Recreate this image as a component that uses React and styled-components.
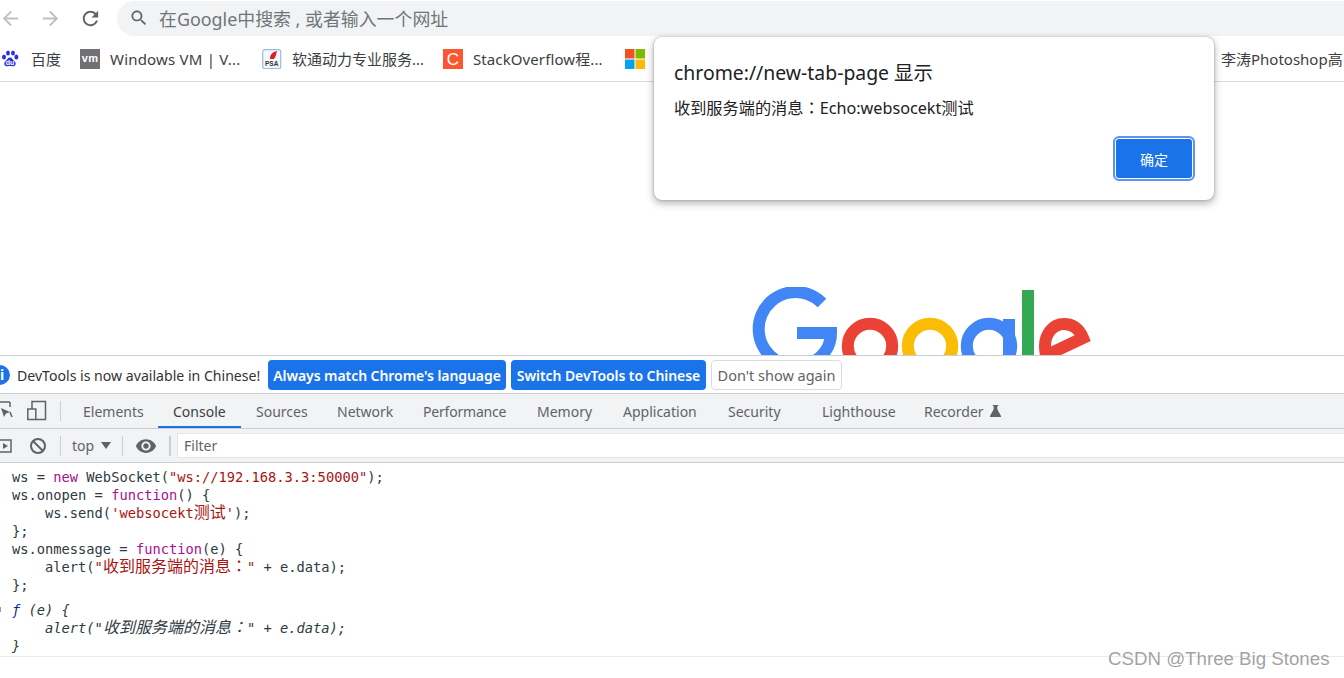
import React from "react";
import styled, { createGlobalStyle } from "styled-components";

const UI_FONT = `"Noto Sans", "Noto Sans CJK SC", sans-serif`;
const MONO_FONT = `"DejaVu Sans Mono", "Noto Sans CJK SC", monospace`;

const Global = createGlobalStyle`
  html, body { margin: 0; padding: 0; background: #fff; overflow: hidden; }
  * { box-sizing: border-box; }
  body { font-family: ${UI_FONT}; }
`;

const Page = styled.div`
  position: relative;
  width: 1344px;
  height: 678px;
  overflow: hidden;
  display: flex;
  flex-direction: column;
`;

const Toolbar = styled.div`
  height: 36px;
  flex: none;
  display: flex;
  align-items: center;
  margin-left: -10px;
  background: #fff;
`;

const NavButton = styled.div`
  width: 40px;
  height: 24px;
  flex: none;
  display: flex;
  align-items: center;
  justify-content: center;
  color: ${(p) => (p.$off ? "#bdc1c6" : "#5f6368")};
  svg { width: 23px; height: 23px; fill: currentColor; }
`;

const Omnibox = styled.div`
  flex: 1;
  height: 35px;
  margin-left: 7px;
  border-radius: 18px 0 0 18px;
  background: #f1f3f4;
  display: flex;
  align-items: center;
  padding-left: 12px;
  color: #70757a;
  font-size: 17.9px;
  white-space: pre;
  svg { width: 20px; height: 20px; fill: #5f6368; margin-right: 10px; }
`;

const Bookmarks = styled.div`
  height: 46px;
  flex: none;
  display: flex;
  align-items: center;
  padding: 0 0 0 1px;
  border-bottom: 1px solid #dadce0;
  background: #fff;
  overflow: hidden;
`;

const Bookmark = styled.div`
  width: ${(p) => p.$w}px;
  flex: none;
  display: flex;
  align-items: center;
  white-space: nowrap;
  font-size: 15px;
  letter-spacing: ${(p) => p.$track || 0}px;
  color: #3c4043;
`;

const IconSlot = styled.span`
  width: 30px;
  flex: none;
  display: flex;
  align-items: center;
  svg { display: block; }
`;

const NewTab = styled.div`
  height: 273px;
  flex: none;
  overflow: hidden;
  background: #fff;
  padding: 205px 0 0 750px;
  svg { display: block; }
`;

const InfoBar = styled.div`
  height: 39px;
  flex: none;
  display: flex;
  align-items: center;
  border-top: 1px solid #cacdd1;
  border-bottom: 1px solid #cacdd1;
  background: #fff;
`;

const InfoIcon = styled.span`
  width: 21px;
  height: 20px;
  margin-left: -11px;
  flex: none;
  border-radius: 50%;
  background: #1a73e8;
  color: #fff;
  font-size: 14px;
  font-weight: 700;
  line-height: 20px;
  text-align: center;
  padding-left: 5px;
`;

const InfoText = styled.span`
  margin: 0 8px 0 7px;
  width: 243px;
  flex: none;
  white-space: nowrap;
  font-size: 14.1px;
  line-height: 22px;
  padding-top: 2px;
  color: #333;
`;

const InfoButton = styled.div`
  height: 30px;
  width: ${(p) => p.$w}px;
  margin-right: 5px;
  padding-top: 1px;
  flex: none;
  display: flex;
  align-items: center;
  justify-content: center;
  white-space: nowrap;
  border-radius: 4px;
  font-size: ${(p) => (p.$plain ? "14.5px" : "14px")};
  font-weight: ${(p) => (p.$plain ? 400 : 600)};
  letter-spacing: ${(p) => (p.$plain ? "0" : "-0.07px")};
  color: ${(p) => (p.$plain ? "#5f6368" : "#fff")};
  background: ${(p) => (p.$plain ? "#fff" : "#1a73e8")};
  border: ${(p) => (p.$plain ? "1px solid #dadce0" : "none")};
`;

const TabBar = styled.div`
  height: 35px;
  flex: none;
  display: flex;
  align-items: stretch;
  background: #f1f3f4;
  border-bottom: 1px solid #cacdd1;
  overflow: hidden;
`;

const TabIcons = styled.div`
  width: 60px;
  flex: none;
  display: flex;
  align-items: center;
  color: #5f6368;
  svg { display: block; }
`;

const Separator = styled.span`
  width: ${(p) => p.$w || 1}px;
  height: 20px;
  flex: none;
  align-self: center;
  background: ${(p) => p.$c || "#cacdd1"};
`;

const TabList = styled.div`
  display: flex;
  align-items: stretch;
  padding-left: 7px;
`;

const Tab = styled.div`
  width: ${(p) => p.$w}px;
  flex: none;
  display: flex;
  align-items: center;
  padding: 2px 0 0 15px;
  white-space: nowrap;
  font-size: 14px;
  letter-spacing: ${(p) => p.$track || 0}px;
  border-bottom: 3px solid ${(p) => (p.$active ? "#1a73e8" : "transparent")};
  margin-bottom: -1px;
  color: ${(p) => (p.$active ? "#3c4043" : "#5f6368")};
  svg { margin-left: 6px; }
`;

const ConsoleBar = styled.div`
  height: 34px;
  flex: none;
  display: flex;
  align-items: center;
  background: #f1f3f4;
  border-bottom: 1px solid #cacdd1;
  color: #5f6368;
`;

const BarIcon = styled.span`
  width: ${(p) => p.$w}px;
  flex: none;
  display: flex;
  align-items: center;
  justify-content: ${(p) => p.$justify || "center"};
  svg { display: block; fill: currentColor; }
`;

const ContextSelect = styled.span`
  width: 61px;
  flex: none;
  display: flex;
  align-items: center;
  padding-left: 11px;
  font-size: 14px;
  color: #5f6368;
  i {
    width: 0;
    height: 0;
    margin-left: 7px;
    border-left: 5px solid transparent;
    border-right: 5px solid transparent;
    border-top: 7px solid #5f6368;
  }
`;

const FilterInput = styled.div`
  flex: 1;
  height: 25px;
  margin-left: 6px;
  padding-left: 6px;
  display: flex;
  align-items: center;
  background: #fff;
  border: 1px solid #e4e6e8;
  border-right: none;
  font-size: 14px;
  color: #5f6368;
`;

const ConsoleArea = styled.div`
  position: relative;
  height: 194px;
  flex: none;
  padding: 5px 0 0 12px;
  background: #fff;
  border-bottom: 1px solid #eaeaea;
`;

const CodeBlock = styled.pre`
  margin: 0 0 ${(p) => p.$after || 0}px;
  font-family: ${MONO_FONT};
  font-size: 13.72px;
  line-height: 18px;
  color: #303942;
  font-style: ${(p) => (p.$italic ? "italic" : "normal")};
`;

const Keyword = styled.span`
  color: #aa0d91;
`;

const Str = styled.span`
  color: #a81414;
`;

const Han = styled.span`
  font-size: 16px;
  line-height: 0;
`;

// the reference was taken with a centred full-width colon
const Colon = styled.span`
  font-family: "Noto Sans CJK TC", sans-serif;
  line-height: 0;
`;

const FnMark = styled.span`
  color: #0d22aa;
`;

const ResultMark = styled.span`
  position: absolute;
  left: 0;
  top: 144px;
  width: 3px;
  height: 5px;
  border-left: 1px solid #9aa0a6;
`;

const Dialog = styled.div`
  position: absolute;
  left: 654px;
  top: 37px;
  width: 560px;
  height: 163px;
  padding: 21px 20px 0;
  display: flex;
  flex-direction: column;
  background: #fff;
  border-radius: 8px;
  box-shadow: 0 0 2px rgba(60, 64, 67, 0.45), 0 3px 7px 1px rgba(60, 64, 67, 0.35);
`;

const DialogTitle = styled.div`
  height: 30px;
  font-size: 19.4px;
  line-height: 30px;
  color: #202124;
`;

const DialogBody = styled.div`
  margin-top: 9px;
  height: 22px;
  font-size: 16.2px;
  line-height: 22px;
  color: #202124;
`;

const DialogFooter = styled.div`
  margin-top: 18px;
  display: flex;
  justify-content: flex-end;
`;

const OkButton = styled.div`
  width: 80px;
  height: 43px;
  display: flex;
  align-items: center;
  justify-content: center;
  border-radius: 5px;
  background: #1a73e8;
  border: 1px solid #fff;
  outline: 2px solid #5a95f5;
  outline-offset: -1px;
  box-shadow: inset 0 0 0 1px #fff;
  color: #fff;
  font-size: 14px;
`;

const Watermark = styled.div`
  position: absolute;
  left: 1108px;
  top: 646px;
  font-family: "Liberation Sans", sans-serif;
  font-size: 18.7px;
  line-height: 26px;
  white-space: nowrap;
  color: rgba(125, 125, 125, 0.72);
  text-shadow: 0 0 2px #fff;
`;

const BaiduIcon = () => (
  <svg width="18" height="18" viewBox="0 0 18 18">
    <g fill="#2932e1">
      <ellipse cx="3" cy="7" rx="2" ry="2.6" />
      <ellipse cx="7" cy="3" rx="1.9" ry="2.6" />
      <ellipse cx="12" cy="3" rx="1.9" ry="2.6" />
      <ellipse cx="15.4" cy="7" rx="2" ry="2.6" />
      <path d="M9 7.5c-2 0-2.6 2-4 3.2-1.6 1.3-2 2.6-1.6 3.9.5 1.6 2 1.9 3 1.7 1-.2 1.7-.4 2.6-.4s1.6.2 2.6.4c1 .2 2.5-.1 3-1.7.4-1.3 0-2.6-1.6-3.9C11.6 9.5 11 7.5 9 7.5z" />
    </g>
    <text x="9" y="15" textAnchor="middle" fontFamily="Liberation Sans" fontWeight="700" fontSize="7" fill="#fff">du</text>
  </svg>
);

const VmIcon = () => (
  <svg width="20" height="20" viewBox="0 0 20 20">
    <rect width="20" height="20" fill="#717074" />
    <text x="10" y="13" textAnchor="middle" fontFamily="Liberation Sans" fontWeight="700" fontSize="11" fill="#fff">vm</text>
  </svg>
);

const PsaIcon = () => (
  <svg width="20" height="20" viewBox="0 0 20 20">
    <rect x="0.7" y="0.7" width="18" height="19" rx="2" fill="#f4f7fb" stroke="#9dbbdc" strokeWidth="1.2" />
    <path d="M8 10c0-4 2-7 7-8-1 3-1 6-3 8z" fill="#d8232a" />
    <text x="9.7" y="17" textAnchor="middle" fontFamily="Liberation Sans" fontWeight="700" fontSize="6.5" fill="#333">PSA</text>
  </svg>
);

const SoIcon = () => (
  <svg width="20" height="20" viewBox="0 0 20 20">
    <rect width="20" height="20" fill="#fc5531" />
    <text x="10" y="16" textAnchor="middle" fontFamily="Liberation Sans" fontSize="17" fill="#fff">C</text>
  </svg>
);

const MsIcon = () => (
  <svg width="20" height="20" viewBox="0 0 20 20">
    <rect width="9.5" height="9.5" fill="#f25022" />
    <rect x="10.5" width="9.5" height="9.5" fill="#7fba00" />
    <rect y="10.5" width="9.5" height="9.5" fill="#00a4ef" />
    <rect x="10.5" y="10.5" width="9.5" height="9.5" fill="#ffb900" />
  </svg>
);

const GoogleLogo = () => (
  <svg width="345" height="68" viewBox="750 287 345 68" fill="none" strokeWidth="12">
    <path d="M822 303A37 37 0 1 0 795 366C815 366 831 352 831 333H797" stroke="#4285f4" />
    <circle cx="870" cy="346" r="22.2" stroke="#ea4335" />
    <circle cx="930" cy="346" r="22.2" stroke="#fbbc05" />
    <circle cx="989" cy="346" r="22.2" stroke="#4285f4" />
    <path d="M1009 319V360" stroke="#4285f4" />
    <rect x="1022" y="290" width="12" height="70" fill="#34a853" stroke="none" />
    <path d="M1045 356L1083 338C1078 326 1070 324 1064 324 1052 324 1045 335 1045 346 1045 352 1046 356 1047 360" stroke="#ea4335" />
  </svg>
);

const BACK = "M20 11H7.83l5.59-5.59L12 4l-8 8 8 8 1.41-1.41L7.83 13H20v-2z";
const FORWARD = "M12 4l-1.41 1.41L16.17 11H4v2h12.17l-5.58 5.59L12 20l8-8z";
const RELOAD = "M17.65 6.35C16.2 4.9 14.21 4 12 4c-4.42 0-7.99 3.58-7.99 8s3.57 8 7.99 8c3.73 0 6.84-2.55 7.73-6h-2.08c-.82 2.33-3.04 4-5.65 4-3.31 0-6-2.69-6-6s2.69-6 6-6c1.66 0 3.14.69 4.22 1.78L13 11h7V4l-2.35 2.35z";
const SEARCH = "M15.5 14h-.79l-.28-.27C15.41 12.59 16 11.11 16 9.5 16 5.91 13.09 3 9.5 3S3 5.91 3 9.5 5.91 16 9.5 16c1.61 0 3.09-.59 4.23-1.57l.27.28v.79l5 4.99L20.49 19l-4.99-5zm-6 0C7.01 14 5 11.99 5 9.5S7.01 5 9.5 5 14 7.01 14 9.5 11.99 14 9.5 14z";
const EYE = "M12 4.5C7 4.5 2.73 7.61 1 12c1.73 4.39 6 7.5 11 7.5s9.27-3.11 11-7.5c-1.73-4.39-6-7.5-11-7.5zM12 17c-2.76 0-5-2.24-5-5s2.24-5 5-5 5 2.24 5 5-2.24 5-5 5zm0-8c-1.66 0-3 1.34-3 3s1.34 3 3 3 3-1.34 3-3-1.34-3-3-3z";

const tabs = [
  { name: "Elements", w: 90 },
  { name: "Console", w: 83, active: true },
  { name: "Sources", w: 81 },
  { name: "Network", w: 86 },
  { name: "Performance", w: 114, track: -0.2 },
  { name: "Memory", w: 86 },
  { name: "Application", w: 105 },
  { name: "Security", w: 94 },
  { name: "Lighthouse", w: 102 },
];

export default function App() {
  return (
    <Page>
      <Global />
      <Toolbar>
        <NavButton $off><svg viewBox="0 0 24 24"><path d={BACK} /></svg></NavButton>
        <NavButton $off><svg viewBox="0 0 24 24"><path d={FORWARD} /></svg></NavButton>
        <NavButton><svg viewBox="0 0 24 24"><path d={RELOAD} /></svg></NavButton>
        <Omnibox>
          <svg viewBox="0 0 24 24"><path d={SEARCH} /></svg>
          在Google中搜索 , 或者输入一个网址
        </Omnibox>
      </Toolbar>

      <Bookmarks>
        <Bookmark $w={79}><IconSlot><BaiduIcon /></IconSlot>百度</Bookmark>
        <Bookmark $w={182} $track={0.2}><IconSlot><VmIcon /></IconSlot>Windows VM | V...</Bookmark>
        <Bookmark $w={181}><IconSlot><PsaIcon /></IconSlot>软通动力专业服务...</Bookmark>
        <Bookmark $w={182} $track={0.1}><IconSlot><SoIcon /></IconSlot>StackOverflow程...</Bookmark>
        <Bookmark $w={566}><IconSlot><MsIcon /></IconSlot></Bookmark>
        <Bookmark $w={160}><IconSlot />李涛Photoshop高</Bookmark>
      </Bookmarks>

      <NewTab><GoogleLogo /></NewTab>

      <InfoBar>
        <InfoIcon>i</InfoIcon>
        <InfoText>DevTools is now available in Chinese!</InfoText>
        <InfoButton $w={238}>Always match Chrome's language</InfoButton>
        <InfoButton $w={195}>Switch DevTools to Chinese</InfoButton>
        <InfoButton $w={131} $plain>Don't show again</InfoButton>
      </InfoBar>

      <TabBar>
        <TabIcons>
          <svg width="60" height="22" viewBox="0 0 60 22" fill="none" stroke="currentColor" strokeWidth="1.5">
            <path d="M-4 2H10M10 2V7" />
            <path d="M1 8l9 4-4 1.5L4 17z" fill="currentColor" stroke="none" />
            <path d="M10 12l2 5" />
            <path d="M32 9V1.5h13.5v18H36" />
            <rect x="27.8" y="9" width="8" height="10.5" />
          </svg>
        </TabIcons>
        <Separator />
        <TabList>
          {tabs.map((t) => (
            <Tab key={t.name} $w={t.w} $active={t.active} $track={t.track}>{t.name}</Tab>
          ))}
          <Tab $w={100}>
            Recorder
            <svg width="11" height="12" viewBox="0 0 12 13"><path d="M3 0h6v1H8v3.5l4 7.5v1H0v-1l4-7.5V1H3z" fill="#5f6368" /></svg>
          </Tab>
        </TabList>
      </TabBar>

      <ConsoleBar>
        <BarIcon $w={22} $justify="flex-start">
          <svg width="12" height="16" viewBox="0 0 12 16" fill="none">
            <path d="M-2 2H11V14H-2" fill="none" stroke="#5f6368" strokeWidth="1.5" />
            <path d="M3 5l5 3-5 3z" fill="#5f6368" />
          </svg>
        </BarIcon>
        <BarIcon $w={32}>
          <svg width="18" height="18" viewBox="0 0 18 18" style={{ fill: "none" }}>
            <circle cx="9" cy="9" r="7" stroke="#5f6368" strokeWidth="2" />
            <path d="M4 4l10 10" stroke="#5f6368" strokeWidth="2" />
          </svg>
        </BarIcon>
        <BarIcon $w={6} />
        <Separator />
        <ContextSelect>top<i /></ContextSelect>
        <Separator />
        <BarIcon $w={46}>
          <svg width="22" height="22" viewBox="0 0 24 24"><path d={EYE} /></svg>
        </BarIcon>
        <Separator $w={2} />
        <FilterInput>Filter</FilterInput>
      </ConsoleBar>

      <ConsoleArea>
        <CodeBlock $after={7}>
          ws = <Keyword>new</Keyword> WebSocket(<Str>"ws://192.168.3.3:50000"</Str>);{"\n"}
          ws.onopen = <Keyword>function</Keyword>() {"{"}{"\n"}
          {"    "}ws.send(<Str>'websocekt<Han>测试</Han>'</Str>);{"\n"}
          {"};"}{"\n"}
          ws.onmessage = <Keyword>function</Keyword>(e) {"{"}{"\n"}
          {"    "}alert(<Str>"<Han>收到服务端的消息<Colon>：</Colon></Han>"</Str> + e.data);{"\n"}
          {"};"}
        </CodeBlock>
        <ResultMark />
        <CodeBlock $italic>
          <FnMark>ƒ</FnMark> (e) {"{"}{"\n"}
          {"    "}alert("<Han>收到服务端的消息<Colon>：</Colon></Han>" + e.data);{"\n"}
          {"}"}
        </CodeBlock>
      </ConsoleArea>

      <Dialog>
        <DialogTitle>chrome://new-tab-page 显示</DialogTitle>
        <DialogBody>收到服务端的消息<Colon>：</Colon>Echo:websocekt测试</DialogBody>
        <DialogFooter><OkButton>确定</OkButton></DialogFooter>
      </Dialog>

      <Watermark>CSDN @Three Big Stones</Watermark>
    </Page>
  );
}
